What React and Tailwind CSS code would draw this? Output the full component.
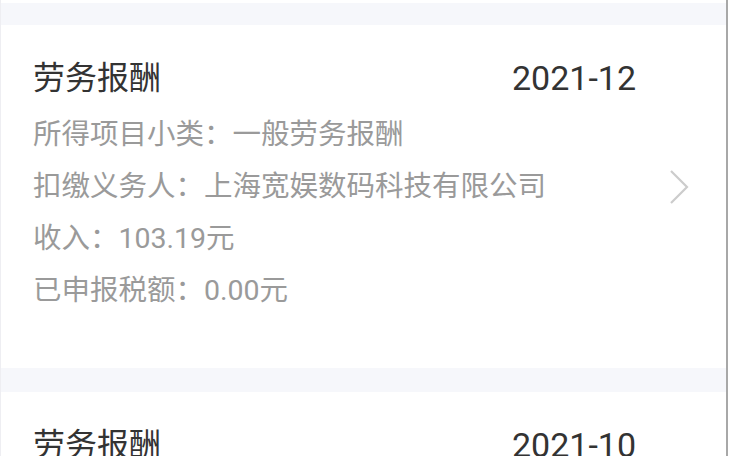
import React from "react";

const font = { fontFamily: "Roboto, 'Noto Sans CJK SC', 'Noto Sans', sans-serif" };

function Card({ date, rows }) {
  return (
    <div className="bg-white">
      <div className="flex items-center justify-between pl-[32px] pr-[90px] pt-[33px]">
        <span className="text-[32px] leading-[40px] text-[#333333]">劳务报酬</span>
        <span className="text-[34px] leading-[40px] text-[#333333]">{date}</span>
      </div>
      {rows && (
        <div className="flex items-start justify-between pl-[32px] pr-[36px] pt-[11px]">
          <div className="flex flex-col">
            {rows.map((r) => (
              <div key={r} className="text-[28.5px] leading-[52px] text-[#9a9a9a] whitespace-nowrap">{r}</div>
            ))}
          </div>
          <svg width="22" height="36" viewBox="0 0 22 36" className="mt-[60px]">
            <path d="M3 2 L19 18 L3 34" fill="none" stroke="#cccccc" strokeWidth="2.2" />
          </svg>
        </div>
      )}
    </div>
  );
}

export default function App() {
  return (
    <div className="w-[730px] h-[456px] overflow-hidden bg-white" style={font}>
      <div className="h-full w-[728px] border-l border-l-[#eeeef2] border-r-2 border-r-[#a8a8a8] flex flex-col">
        <div className="h-[3px] bg-white shrink-0" />
        <div className="h-[22px] bg-[#f6f7fb] shrink-0" />
        <div className="h-[343px] shrink-0 bg-white">
          <Card
            date="2021-12"
            rows={[
              "所得项目小类：一般劳务报酬",
              "扣缴义务人：上海宽娱数码科技有限公司",
              "收入：103.19元",
              "已申报税额：0.00元",
            ]}
          />
        </div>
        <div className="h-[24px] bg-[#f6f7fb] shrink-0" />
        <Card date="2021-10" />
      </div>
    </div>
  );
}
